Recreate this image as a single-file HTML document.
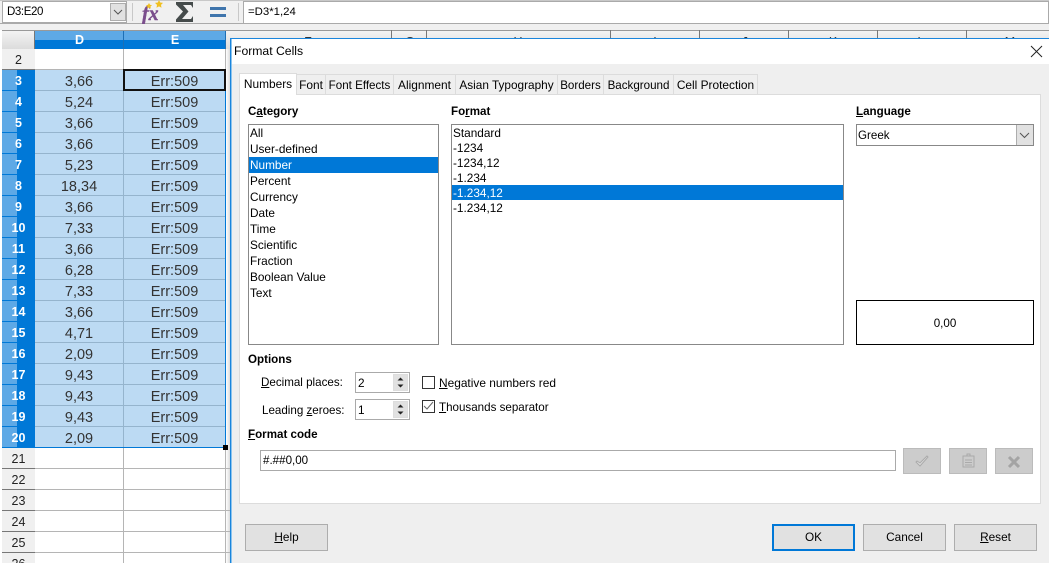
<!DOCTYPE html>
<html><head><meta charset="utf-8"><style>
html,body{margin:0;padding:0;width:1049px;height:563px;overflow:hidden;background:#fff}
body{position:relative;font-family:"Liberation Sans",sans-serif;font-size:11.8px;color:#000}
div,span.a{position:absolute;box-sizing:border-box;white-space:nowrap}
u{text-decoration:underline}
.r{left:2px;width:224px;height:21px}
.h{left:0;top:0;width:33px;height:21px;background:#f0f0f0;border-bottom:1px solid #777;text-align:center;font-size:12.5px;line-height:23px;color:#222}
.c{top:0;height:21px;border-right:1px solid #b5b5b5;border-bottom:1px solid #b5b5b5}
.d{left:33px;width:89px}.e{left:122px;width:102px}
.s .h{background:linear-gradient(90deg,#5ea9e6 0 15px,#0078d7 15px);color:#fff;font-weight:bold;border-bottom:1px solid #0078d7;line-height:22px}
.s .c{background:#bcdaf3;border-color:#95b4cd;text-align:center;font-size:14.5px;line-height:24px;color:#333}
.tab{top:74px;height:21px;background:#efefef;border:1px solid #dcdcdc;border-left:0;line-height:21px;text-align:center;font-size:11.9px}
.l{font-size:11.8px;line-height:16px;left:1px}
.b{font-weight:bold;font-size:11.6px}
.t{font-size:11.7px}
.btn{height:27px;width:83px;top:524px;background:#e1e1e1;border:1px solid #adadad;text-align:center;line-height:25px;font-size:11.8px}
.ib{top:448px;width:38px;height:26px;background:#ccc;border:1px solid #bbb}
.spin{width:55px;height:21px;border:1px solid #aaa;background:#fff;font-size:11.8px;line-height:20px;padding-left:2px}
.sb{right:1px;top:1px;width:15px;height:17px;background:#e1e1e1;border:1px solid #ddd}
.col{top:35px;font-size:12.5px;line-height:14px;color:#333;transform:translateX(-50%)}
</style></head><body>

<!-- toolbar -->
<div style="left:0;top:0;width:1049px;height:30px;background:#f0f0f0"></div>
<div style="left:0;top:23px;width:1049px;height:1px;background:#aaa"></div>
<div style="left:0;top:0;width:1049px;height:1px;background:#c8c8c8"></div>
<div style="left:2px;top:1px;width:125px;height:22px;background:#fff;border:1px solid #aaa;padding-left:4px;line-height:21px;font-size:11.5px;letter-spacing:-.4px">D3:E20</div>
<div style="left:110px;top:3px;width:16px;height:18px;background:#e1e1e1;border:1px solid #adadad"><svg width="14" height="16" style="position:absolute;left:0;top:0"><path d="M3 6l4 4 4-4" fill="none" stroke="#555"/></svg></div>
<div style="left:132px;top:3px;width:1px;height:18px;background:#c8c8c8"></div>
<svg style="position:absolute;left:140px;top:0" width="24" height="24"><text x="2" y="20" font-family="Liberation Serif" font-style="italic" font-weight="bold" font-size="20" fill="#7a4d8c" stroke="#7a4d8c" stroke-width=".4">fx</text><path d="M9 3l1 1.800 2 .4-1.500 1.300.3 2-1.800-1-1.800 1 .3-2L6 5.200l2-.4zM19 0l1.200 2.500 2.800.4-2 2 .5 2.800-2.500-1.300-2.500 1.300.5-2.800-2-2 2.800-.4z" fill="#f0c020"/></svg>
<svg style="position:absolute;left:175px;top:0" width="20" height="24"><path d="M1 2h17v6l-2-3H8l5.500 6.500L7 19h9l2-3v6H1v-2.500l7-8L1 4.500z" fill="#454b4b"/></svg>
<div style="left:210px;top:7px;width:16px;height:3px;background:#3f75ac"></div>
<div style="left:210px;top:14px;width:16px;height:3px;background:#3f75ac"></div>
<div style="left:238px;top:3px;width:1px;height:18px;background:#c8c8c8"></div>
<div style="left:243px;top:1px;width:806px;height:23px;background:#fff;border:1px solid #aaa;padding-left:4px;line-height:21px;font-size:11.4px">=D3*1,24</div>

<!-- column headers -->
<div style="left:2px;top:30px;width:1047px;height:19px;background:linear-gradient(#f3f3f3,#dcdcdc);border-top:1px solid #999"></div>
<div style="left:35px;top:31px;width:191px;height:9px;background:#5ea9e6"></div>
<div style="left:35px;top:40px;width:191px;height:9px;background:#0078d7"></div>
<div style="left:35px;top:30px;width:89px;height:19px;text-align:center;color:#fff;font-weight:bold;font-size:12.5px;line-height:21px">D</div>
<div style="left:124px;top:30px;width:102px;height:19px;text-align:center;color:#fff;font-weight:bold;font-size:12.5px;line-height:21px">E</div>
<div style="left:34px;top:31px;width:1px;height:18px;background:#777"></div>
<div style="left:123px;top:31px;width:1px;height:18px;background:#1d6fb5"></div>
<div style="left:225px;top:31px;width:1px;height:18px;background:#1d6fb5"></div>
<div style="left:391px;top:30px;width:1px;height:8px;background:#777"></div>
<div style="left:426px;top:30px;width:1px;height:8px;background:#777"></div>
<div style="left:610px;top:30px;width:1px;height:8px;background:#777"></div>
<div style="left:699px;top:30px;width:1px;height:8px;background:#777"></div>
<div style="left:788px;top:30px;width:1px;height:8px;background:#777"></div>
<div style="left:877px;top:30px;width:1px;height:8px;background:#777"></div>
<div style="left:966px;top:30px;width:1px;height:8px;background:#777"></div>
<div class="col" style="left:308px">F</div>
<div class="col" style="left:410px">G</div>
<div class="col" style="left:518px">H</div>
<div class="col" style="left:655px">I</div>
<div class="col" style="left:745px">J</div>
<div class="col" style="left:833px">K</div>
<div class="col" style="left:921px">L</div>
<div class="col" style="left:1010px">M</div>

<!-- rows -->
<div class="r" style="top:49px"><div class="h">2</div><div class="c d"></div><div class="c e"></div></div>
<div class="r s" style="top:70px"><div class="h">3</div><div class="c d">3,66</div><div class="c e">Err:509</div></div>
<div class="r s" style="top:91px"><div class="h">4</div><div class="c d">5,24</div><div class="c e">Err:509</div></div>
<div class="r s" style="top:112px"><div class="h">5</div><div class="c d">3,66</div><div class="c e">Err:509</div></div>
<div class="r s" style="top:133px"><div class="h">6</div><div class="c d">3,66</div><div class="c e">Err:509</div></div>
<div class="r s" style="top:154px"><div class="h">7</div><div class="c d">5,23</div><div class="c e">Err:509</div></div>
<div class="r s" style="top:175px"><div class="h">8</div><div class="c d">18,34</div><div class="c e">Err:509</div></div>
<div class="r s" style="top:196px"><div class="h">9</div><div class="c d">3,66</div><div class="c e">Err:509</div></div>
<div class="r s" style="top:217px"><div class="h">10</div><div class="c d">7,33</div><div class="c e">Err:509</div></div>
<div class="r s" style="top:238px"><div class="h">11</div><div class="c d">3,66</div><div class="c e">Err:509</div></div>
<div class="r s" style="top:259px"><div class="h">12</div><div class="c d">6,28</div><div class="c e">Err:509</div></div>
<div class="r s" style="top:280px"><div class="h">13</div><div class="c d">7,33</div><div class="c e">Err:509</div></div>
<div class="r s" style="top:301px"><div class="h">14</div><div class="c d">3,66</div><div class="c e">Err:509</div></div>
<div class="r s" style="top:322px"><div class="h">15</div><div class="c d">4,71</div><div class="c e">Err:509</div></div>
<div class="r s" style="top:343px"><div class="h">16</div><div class="c d">2,09</div><div class="c e">Err:509</div></div>
<div class="r s" style="top:364px"><div class="h">17</div><div class="c d">9,43</div><div class="c e">Err:509</div></div>
<div class="r s" style="top:385px"><div class="h">18</div><div class="c d">9,43</div><div class="c e">Err:509</div></div>
<div class="r s" style="top:406px"><div class="h">19</div><div class="c d">9,43</div><div class="c e">Err:509</div></div>
<div class="r s" style="top:427px"><div class="h">20</div><div class="c d">2,09</div><div class="c e">Err:509</div></div>
<div class="r" style="top:448px"><div class="h">21</div><div class="c d"></div><div class="c e"></div></div>
<div class="r" style="top:469px"><div class="h">22</div><div class="c d"></div><div class="c e"></div></div>
<div class="r" style="top:490px"><div class="h">23</div><div class="c d"></div><div class="c e"></div></div>
<div class="r" style="top:511px"><div class="h">24</div><div class="c d"></div><div class="c e"></div></div>
<div class="r" style="top:532px"><div class="h">25</div><div class="c d"></div><div class="c e"></div></div>
<div class="r" style="top:553px"><div class="h">26</div><div class="c d"></div><div class="c e"></div></div>
<div style="left:226px;top:49px;width:4px;height:514px;background:linear-gradient(90deg,#fff,#dcdcdc)"></div>
<div style="left:226px;top:448px;width:4px;height:115px;background:repeating-linear-gradient(transparent 0 20px,#b5b5b5 20px 21px)"></div>
<div style="left:225px;top:70px;width:1px;height:378px;background:#0078d7"></div>
<div style="left:35px;top:447px;width:191px;height:1px;background:#0078d7"></div>
<div style="left:123px;top:69px;width:103px;height:22px;border:2px solid #111"></div>
<div style="left:223px;top:445px;width:5px;height:5px;background:#000"></div>

<!-- dialog -->
<div style="left:230px;top:38px;width:819px;height:525px;background:#efefef;border-top:1px solid #1a85dc;border-left:1px solid #1a85dc"></div>
<div style="left:231px;top:39px;width:1px;height:524px;background:#8cc4ee"></div>
<div style="left:232px;top:39px;width:817px;height:25px;background:#fff;line-height:25px;padding-left:2px;font-size:12.2px">Format Cells</div>
<svg style="position:absolute;left:1030px;top:45px" width="13" height="13"><path d="M1 1l11 11M12 1L1 12" stroke="#222" fill="none"/></svg>

<div style="left:239px;top:94px;width:802px;height:410px;background:#fff;border:1px solid #dcdcdc"></div>
<div class="tab" style="left:239px;top:73px;width:58px;height:22px;background:#fff;border:1px solid #dcdcdc;border-bottom:0">Numbers</div>
<div class="tab" style="left:297px;width:29px">Font</div>
<div class="tab" style="left:326px;width:68px;font-size:11.6px">Font Effects</div>
<div class="tab" style="left:394px;width:62px">Alignment</div>
<div class="tab" style="left:456px;width:102px;font-size:11.8px">Asian Typography</div>
<div class="tab" style="left:558px;width:46px;font-size:11.6px">Borders</div>
<div class="tab" style="left:604px;width:70px;font-size:11.6px">Background</div>
<div class="tab" style="left:674px;width:84px">Cell Protection</div>

<div class="b" style="left:248px;top:105px">C<u>a</u>tegory</div>
<div class="b" style="left:451px;top:105px">Fo<u>r</u>mat</div>
<div class="b" style="left:856px;top:105px"><u>L</u>anguage</div>

<div style="left:248px;top:124px;width:191px;height:221px;border:1px solid #888;background:#fff">
<div class="l" style="top:0">All</div>
<div class="l" style="top:16px">User-defined</div>
<div style="left:0;top:32px;width:189px;height:16px;background:#0078d7"></div>
<div class="l" style="top:32px;color:#fff">Number</div>
<div class="l" style="top:48px">Percent</div>
<div class="l" style="top:64px">Currency</div>
<div class="l" style="top:80px">Date</div>
<div class="l" style="top:96px">Time</div>
<div class="l" style="top:112px">Scientific</div>
<div class="l" style="top:128px">Fraction</div>
<div class="l" style="top:144px">Boolean Value</div>
<div class="l" style="top:160px">Text</div>
</div>

<div style="left:451px;top:124px;width:393px;height:221px;border:1px solid #888;background:#fff">
<div class="l" style="top:0;line-height:17px">Standard</div>
<div class="l" style="top:15px;line-height:17px">-1234</div>
<div class="l" style="top:30px;line-height:17px">-1234,12</div>
<div class="l" style="top:45px;line-height:17px">-1.234</div>
<div style="left:0;top:60px;width:391px;height:15px;background:#0078d7"></div>
<div class="l" style="top:60px;line-height:17px;color:#fff">-1.234,12</div>
<div class="l" style="top:75px;line-height:17px">-1.234,12</div>
</div>

<div style="left:856px;top:124px;width:178px;height:22px;border:1px solid #888;background:#fff;padding-left:1px;line-height:21px;font-size:11.6px">Greek
<div style="right:0;top:0;width:17px;height:20px;background:#e1e1e1;border-left:1px solid #adadad"><svg width="16" height="20" style="position:absolute;left:0;top:0"><path d="M3 8l4.500 4.500L12 8" fill="none" stroke="#555"/></svg></div></div>
<div style="left:856px;top:300px;width:178px;height:45px;border:1px solid #000;background:#fff;text-align:center;line-height:45px;font-size:11.6px">0,00</div>

<div class="b" style="left:248px;top:353px">Options</div>
<div class="t" style="left:261px;top:376px;font-size:11.6px"><u>D</u>ecimal places:</div>
<div class="t" style="left:262px;top:404px;font-size:11.6px">Leading <u>z</u>eroes:</div>
<div class="spin" style="left:355px;top:372px">2<div class="sb"><svg width="13" height="15" style="position:absolute;left:0;top:0"><path d="M6.500 2.500l3 3h-6zM6.500 12.500l-3-3h6z" fill="#222"/></svg></div></div>
<div class="spin" style="left:355px;top:399px">1<div class="sb"><svg width="13" height="15" style="position:absolute;left:0;top:0"><path d="M6.500 2.500l3 3h-6zM6.500 12.500l-3-3h6z" fill="#222"/></svg></div></div>
<div style="left:422px;top:376px;width:13px;height:13px;border:1px solid #333;background:#fff"></div>
<div class="t" style="left:439px;top:376px;font-size:11.9px"><u>N</u>egative numbers red</div>
<div style="left:422px;top:400px;width:13px;height:13px;border:1px solid #333;background:#fff"><svg width="11" height="11" style="position:absolute;left:0;top:0"><path d="M1 5l3 3 6-7" fill="none" stroke="#666"/></svg></div>
<div class="t" style="left:439px;top:401px;font-size:11.6px"><u>T</u>housands separator</div>

<div class="b" style="left:248px;top:428px"><u>F</u>ormat code</div>
<div style="left:260px;top:450px;width:636px;height:21px;border:1px solid #aaa;background:#fff;padding-left:2px;line-height:20px;font-size:11.6px">#.##0,00</div>
<div class="ib" style="left:903px"><svg width="36" height="24" style="position:absolute;left:0;top:0"><path d="M12 13l4 4 8-9-1-1-7 7-3-2z" fill="#ddd" stroke="#aaa"/></svg></div>
<div class="ib" style="left:949px"><svg width="36" height="24" style="position:absolute;left:0;top:0"><path d="M13 7h11v11H13zM15 11h7M15 13.500h7M15 16h7M17 7V5h3v2" fill="none" stroke="#aaa"/></svg></div>
<div class="ib" style="left:995px"><svg width="36" height="24" style="position:absolute;left:0;top:0"><path d="M13 8l10 10M23 8L13 18" fill="none" stroke="#a4a4a4" stroke-width="3"/></svg></div>

<div class="btn" style="left:245px"><u>H</u>elp</div>
<div class="btn" style="left:772px;border:2px solid #0078d7;line-height:23px">OK</div>
<div class="btn" style="left:863px">Cancel</div>
<div class="btn" style="left:954px"><u>R</u>eset</div>
</body></html>
